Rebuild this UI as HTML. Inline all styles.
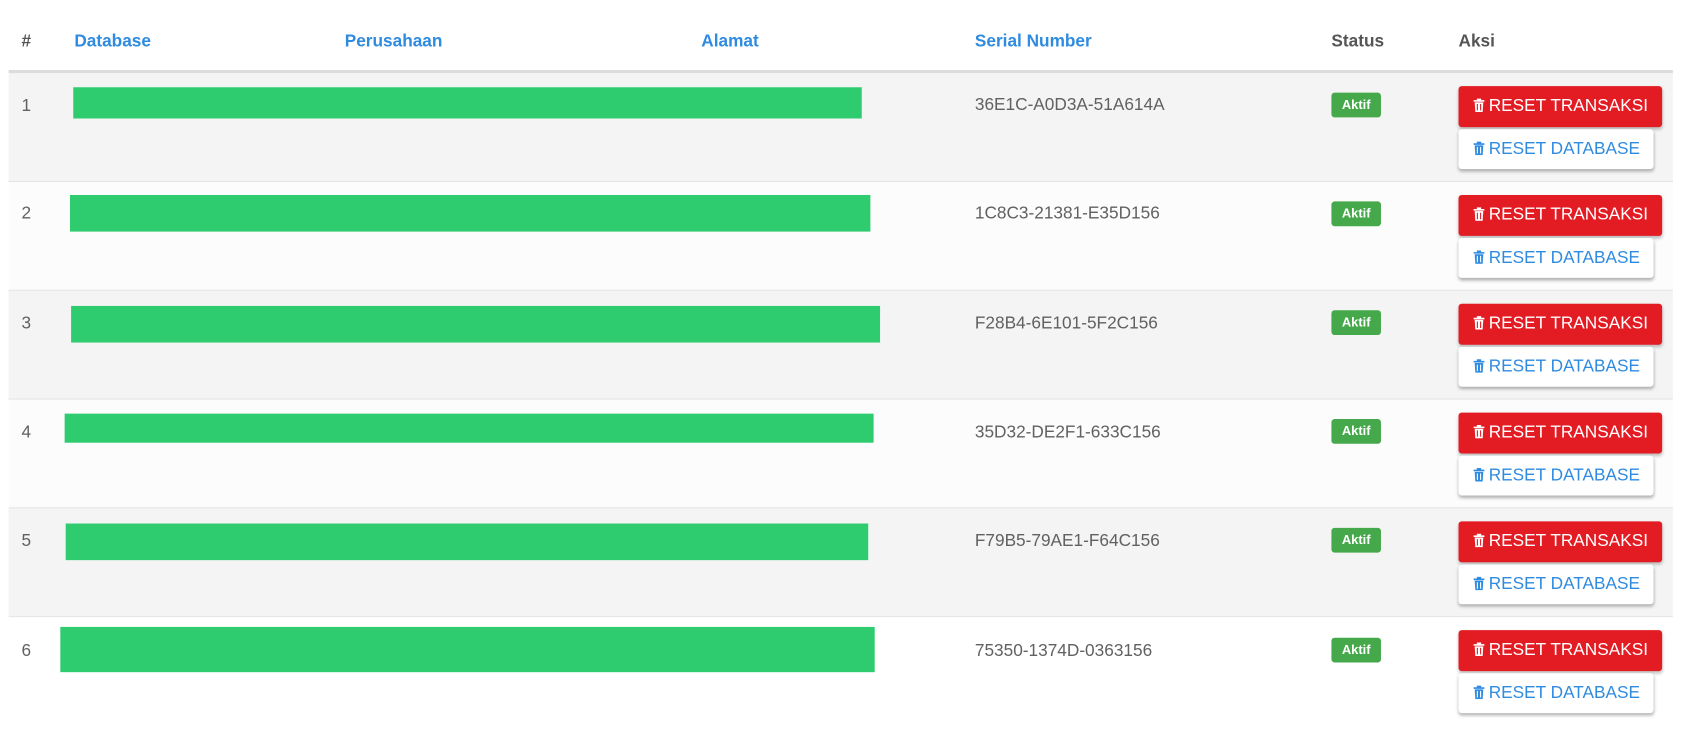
<!DOCTYPE html>
<html><head><meta charset="utf-8"><style>
*{margin:0;padding:0;box-sizing:border-box}
body{width:1689px;height:736px;background:#fff;font-family:"Liberation Sans",Arial,sans-serif;position:relative;overflow:hidden;color:#616161}
#w{position:absolute;left:0;top:0;width:1568px;height:683px;transform:scale(1.0772);transform-origin:0 0}
.a{position:absolute;white-space:nowrap}
.h{top:30px;font-size:16px;font-weight:bold;color:#2f8be0}
.row{position:absolute;left:8px;width:1545px;height:101px;border-bottom:1px solid #e3e3e3}
.num{font-size:16px;color:#616161}
.ser{font-size:16px;color:#616161}
.bar{position:absolute;background:#2ecc6e}
.bdg{position:absolute;left:1236px;width:46px;height:23px;background:#45a84a;border-radius:3px;color:#fff;font-size:12px;font-weight:bold;text-align:center;line-height:23px}
.rt{position:absolute;left:1354px;width:189px;height:38px;background:#e31b23;border-radius:3px;color:#fff;font-size:16px;line-height:38px;padding-left:13px;box-shadow:0 2px 3px rgba(0,0,0,.25)}
.rd{position:absolute;left:1354px;width:181px;height:37px;background:#fff;border-radius:3px;color:#2f8be0;font-size:16px;line-height:37px;padding-left:13px;box-shadow:0 2px 3px rgba(0,0,0,.3)}
svg{vertical-align:-1px;margin-right:3px}
</style></head><body><div id="w">
<div class="a h" style="left:20px;color:#555">#</div>
<div class="a h" style="left:69px">Database</div>
<div class="a h" style="left:320px">Perusahaan</div>
<div class="a h" style="left:651px">Alamat</div>
<div class="a h" style="left:905px">Serial Number</div>
<div class="a h" style="left:1236px;color:#555">Status</div>
<div class="a h" style="left:1354px;color:#555">Aksi</div>
<div class="a" style="left:8px;top:65px;width:1545px;height:3px;background:#dcdcdc"></div>

<div class="row" style="top:68px;background:#f4f4f4"></div>
<div class="row" style="top:169px;background:#fcfcfc"></div>
<div class="row" style="top:270px;background:#f4f4f4"></div>
<div class="row" style="top:371px;background:#fcfcfc"></div>
<div class="row" style="top:472px;background:#f4f4f4"></div>
<div class="row" style="top:573px;background:#fff;border-bottom:none"></div>

<div class="bar" style="left:68px;top:81px;width:732px;height:29px"></div>
<div class="bar" style="left:65px;top:181px;width:743px;height:34px"></div>
<div class="bar" style="left:66px;top:284px;width:751px;height:34px"></div>
<div class="bar" style="left:60px;top:384px;width:751px;height:27px"></div>
<div class="bar" style="left:61px;top:486px;width:745px;height:34px"></div>
<div class="bar" style="left:56px;top:582px;width:756px;height:42px"></div>

<div class="a num" style="left:20px;top:90px">1</div>
<div class="a num" style="left:20px;top:190px">2</div>
<div class="a num" style="left:20px;top:292px">3</div>
<div class="a num" style="left:20px;top:393px">4</div>
<div class="a num" style="left:20px;top:494px">5</div>
<div class="a num" style="left:20px;top:596px">6</div>

<div class="a ser" style="left:905px;top:89px">36E1C-A0D3A-51A614A</div>
<div class="a ser" style="left:905px;top:190px">1C8C3-21381-E35D156</div>
<div class="a ser" style="left:905px;top:292px">F28B4-6E101-5F2C156</div>
<div class="a ser" style="left:905px;top:393px">35D32-DE2F1-633C156</div>
<div class="a ser" style="left:905px;top:494px">F79B5-79AE1-F64C156</div>
<div class="a ser" style="left:905px;top:596px">75350-1374D-0363156</div>

<div class="bdg" style="top:86px">Aktif</div>
<div class="bdg" style="top:187px">Aktif</div>
<div class="bdg" style="top:288px">Aktif</div>
<div class="bdg" style="top:389px">Aktif</div>
<div class="bdg" style="top:490px">Aktif</div>
<div class="bdg" style="top:592px">Aktif</div>

<div class="rt" style="top:80px"><svg width="12" height="13" viewBox="0 0 12 13"><path fill="#fff" d="M1 2h10v1.5H1zM4 0.5h4v1.5H4zM2 4h8l-.6 9H2.6zM4 5.5v6h1v-6zM7 5.5v6h1v-6z"/></svg>RESET TRANSAKSI</div>
<div class="rd" style="top:120px"><svg width="12" height="13" viewBox="0 0 12 13"><path fill="#2f8be0" d="M1 2h10v1.5H1zM4 0.5h4v1.5H4zM2 4h8l-.6 9H2.6zM4 5.5v6h1v-6zM7 5.5v6h1v-6z"/></svg>RESET DATABASE</div>
<div class="rt" style="top:181px"><svg width="12" height="13" viewBox="0 0 12 13"><path fill="#fff" d="M1 2h10v1.5H1zM4 0.5h4v1.5H4zM2 4h8l-.6 9H2.6zM4 5.5v6h1v-6zM7 5.5v6h1v-6z"/></svg>RESET TRANSAKSI</div>
<div class="rd" style="top:221px"><svg width="12" height="13" viewBox="0 0 12 13"><path fill="#2f8be0" d="M1 2h10v1.5H1zM4 0.5h4v1.5H4zM2 4h8l-.6 9H2.6zM4 5.5v6h1v-6zM7 5.5v6h1v-6z"/></svg>RESET DATABASE</div>
<div class="rt" style="top:282px"><svg width="12" height="13" viewBox="0 0 12 13"><path fill="#fff" d="M1 2h10v1.5H1zM4 0.5h4v1.5H4zM2 4h8l-.6 9H2.6zM4 5.5v6h1v-6zM7 5.5v6h1v-6z"/></svg>RESET TRANSAKSI</div>
<div class="rd" style="top:322px"><svg width="12" height="13" viewBox="0 0 12 13"><path fill="#2f8be0" d="M1 2h10v1.5H1zM4 0.5h4v1.5H4zM2 4h8l-.6 9H2.6zM4 5.5v6h1v-6zM7 5.5v6h1v-6z"/></svg>RESET DATABASE</div>
<div class="rt" style="top:383px"><svg width="12" height="13" viewBox="0 0 12 13"><path fill="#fff" d="M1 2h10v1.5H1zM4 0.5h4v1.5H4zM2 4h8l-.6 9H2.6zM4 5.5v6h1v-6zM7 5.5v6h1v-6z"/></svg>RESET TRANSAKSI</div>
<div class="rd" style="top:423px"><svg width="12" height="13" viewBox="0 0 12 13"><path fill="#2f8be0" d="M1 2h10v1.5H1zM4 0.5h4v1.5H4zM2 4h8l-.6 9H2.6zM4 5.5v6h1v-6zM7 5.5v6h1v-6z"/></svg>RESET DATABASE</div>
<div class="rt" style="top:484px"><svg width="12" height="13" viewBox="0 0 12 13"><path fill="#fff" d="M1 2h10v1.5H1zM4 0.5h4v1.5H4zM2 4h8l-.6 9H2.6zM4 5.5v6h1v-6zM7 5.5v6h1v-6z"/></svg>RESET TRANSAKSI</div>
<div class="rd" style="top:524px"><svg width="12" height="13" viewBox="0 0 12 13"><path fill="#2f8be0" d="M1 2h10v1.5H1zM4 0.5h4v1.5H4zM2 4h8l-.6 9H2.6zM4 5.5v6h1v-6zM7 5.5v6h1v-6z"/></svg>RESET DATABASE</div>
<div class="rt" style="top:585px"><svg width="12" height="13" viewBox="0 0 12 13"><path fill="#fff" d="M1 2h10v1.5H1zM4 0.5h4v1.5H4zM2 4h8l-.6 9H2.6zM4 5.5v6h1v-6zM7 5.5v6h1v-6z"/></svg>RESET TRANSAKSI</div>
<div class="rd" style="top:625px"><svg width="12" height="13" viewBox="0 0 12 13"><path fill="#2f8be0" d="M1 2h10v1.5H1zM4 0.5h4v1.5H4zM2 4h8l-.6 9H2.6zM4 5.5v6h1v-6zM7 5.5v6h1v-6z"/></svg>RESET DATABASE</div>
</div></body></html>
